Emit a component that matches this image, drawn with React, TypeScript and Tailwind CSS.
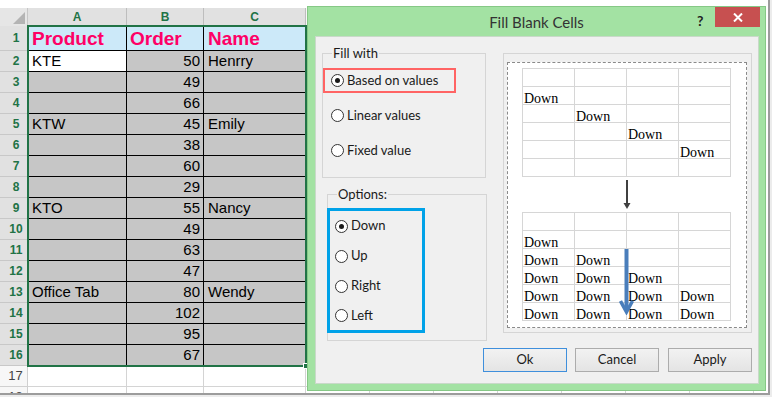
import React from "react";

type Row = { a?: string; b: string; c?: string };

const DATA: Row[] = [
  { a: "KTE", b: "50", c: "Henrry" },
  { b: "49" },
  { b: "66" },
  { a: "KTW", b: "45", c: "Emily" },
  { b: "38" },
  { b: "60" },
  { b: "29" },
  { a: "KTO", b: "55", c: "Nancy" },
  { b: "49" },
  { b: "63" },
  { b: "47" },
  { a: "Office Tab", b: "80", c: "Wendy" },
  { b: "102" },
  { b: "95" },
  { b: "67" },
];

const EXTRA = ["D", "E", "F", "G", "H", "I", "J"];

function RowHead({ n, sel }: { n: number; sel?: boolean }) {
  return (
    <div
      className={
        sel
          ? "w-[28px] shrink-0 flex items-center justify-center pl-[4px] bg-[#e1e1e1] border-b border-[#c8c8c8] text-[12px] font-bold text-[#217346]"
          : "w-[28px] shrink-0 flex items-center justify-center pl-[4px] bg-[#f7f7f7] border-b border-r border-[#d0d0d0] text-[13px] text-[#444]"
      }
    >
      {n}
    </div>
  );
}

function Blank() {
  return (
    <>
      {EXTRA.map((k) => (
        <div key={k} className="w-[64px] shrink-0 bg-white border-r border-b border-[#d4d4d4]" />
      ))}
    </>
  );
}

function Sheet() {
  return (
    <div className="relative flex flex-col w-[768px] h-[393px] overflow-hidden bg-white border-r-2 border-b-2 border-[#9c9c9c] box-content">
      <div className="h-[8px] shrink-0 bg-white" />
      {/* column headers */}
      <div className="flex h-[18px] shrink-0">
        <div className="relative w-[28px] shrink-0 bg-[#e6e6e6] border-r border-[#c6c6c6]">
          <svg className="absolute left-[13px] top-[4px]" width="12" height="12" viewBox="0 0 12 12">
            <path d="M12 0 L12 12 L0 12 Z" fill="#b4b4b4" />
          </svg>
        </div>
        <div className="w-[99px] shrink-0 flex items-center justify-center bg-[#e1e1e1] border-r border-[#bdbdbd] text-[12px] font-bold text-[#217346]">
          A
        </div>
        <div className="w-[77px] shrink-0 flex items-center justify-center bg-[#e1e1e1] border-r border-[#bdbdbd] text-[12px] font-bold text-[#217346]">
          B
        </div>
        <div className="w-[102px] shrink-0 flex items-center justify-center bg-[#e1e1e1] border-r border-[#bdbdbd] text-[12px] font-bold text-[#217346]">
          C
        </div>
        {EXTRA.map((k) => (
          <div
            key={k}
            className="w-[64px] shrink-0 flex items-center justify-center bg-[#f7f7f7] border-r border-[#d4d4d4] text-[12px] text-[#444]"
          >
            {k}
          </div>
        ))}
      </div>

      {/* row 1 */}
      <div className="flex h-[25px] shrink-0">
        <RowHead n={1} sel />
        <div className="w-[99px] shrink-0 bg-[#cce9f9] border-r border-b border-black pl-[4px] pt-[1px] text-[19px] leading-[24px] font-bold text-[#ff0066]">
          Product
        </div>
        <div className="w-[77px] shrink-0 bg-[#cce9f9] border-r border-b border-black pl-[3px] pt-[1px] text-[19px] leading-[24px] font-bold text-[#ff0066]">
          Order
        </div>
        <div className="w-[102px] shrink-0 bg-[#cce9f9] border-r border-b border-black pl-[4px] pt-[1px] text-[19px] leading-[24px] font-bold text-[#ff0066]">
          Name
        </div>
        <Blank />
      </div>

      {DATA.map((r, i) => (
        <div key={i} className="flex h-[21px] shrink-0">
          <RowHead n={i + 2} sel />
          <div
            className={
              i === 0
                ? "w-[99px] shrink-0 bg-white border-r border-b border-black pl-[4px] text-[15px] leading-[20px] text-black"
                : "w-[99px] shrink-0 bg-[#c6c6c6] border-r border-b border-black pl-[4px] text-[15px] leading-[20px] text-black"
            }
          >
            {r.a}
          </div>
          <div className="w-[77px] shrink-0 bg-[#c6c6c6] border-r border-b border-black pr-[3px] text-right text-[15px] leading-[20px] text-black">
            {r.b}
          </div>
          <div className="w-[102px] shrink-0 bg-[#c6c6c6] border-r border-b border-black pl-[4px] text-[15px] leading-[20px] text-black">
            {r.c}
          </div>
          <Blank />
        </div>
      ))}

      {[17, 18].map((n) => (
        <div key={n} className="flex h-[21px] shrink-0">
          <RowHead n={n} />
          <div className="w-[99px] shrink-0 border-r border-b border-[#d4d4d4]" />
          <div className="w-[77px] shrink-0 border-r border-b border-[#d4d4d4]" />
          <div className="w-[102px] shrink-0 border-r border-b border-[#d4d4d4]" />
          <Blank />
        </div>
      ))}

      {/* selection outline A1:C16 */}
      <div className="absolute left-[27px] top-[25px] w-[280px] h-[342px] border-2 border-[#217346] pointer-events-none" />
      <div className="absolute left-[303px] top-[363px] w-[6px] h-[6px] bg-[#217346] border border-white" />
    </div>
  );
}

function Radio({ checked }: { checked?: boolean }) {
  return (
    <span className="w-[13px] h-[13px] shrink-0 rounded-full border border-[#333] bg-white flex items-center justify-center">
      {checked && <span className="w-[5px] h-[5px] rounded-full bg-[#1a1a1a]" />}
    </span>
  );
}

function Opt({ label, checked, h }: { label: string; checked?: boolean; h: string }) {
  return (
    <div className={`flex items-center gap-[3px] ${h}`}>
      <Radio checked={checked} />
      <span>{label}</span>
    </div>
  );
}

function MiniGrid({ filled }: { filled: (r: number, c: number) => boolean }) {
  return (
    <div className="grid grid-cols-[repeat(4,52px)] border-t border-l border-[#d6d6d6] w-max">
      {Array.from({ length: 24 }).map((_, k) => {
        const r = Math.floor(k / 4);
        const c = k % 4;
        return (
          <div
            key={k}
            className="h-[18px] border-r border-b border-[#d6d6d6] pl-[1px] pt-[5px] text-[14px] leading-[14px] text-black font-['Liberation_Serif',serif]"
          >
            {filled(r, c) ? "Down" : ""}
          </div>
        );
      })}
    </div>
  );
}

function Button({ label, primary }: { label: string; primary?: boolean }) {
  return (
    <div
      className={
        primary
          ? "h-[24px] w-[84px] flex items-center justify-center border border-[#3f8fdc] bg-gradient-to-b from-[#f2f2f2] to-[#e4e4e4]"
          : "h-[24px] w-[84px] flex items-center justify-center border border-[#acacac] bg-gradient-to-b from-[#f2f2f2] to-[#e4e4e4]"
      }
    >
      {label}
    </div>
  );
}

function Dialog() {
  return (
    <div className="absolute left-[307px] top-[6px] w-[459px] h-[385px] flex flex-col bg-[#a3e2a3] border border-[#86c886] font-['Lato',sans-serif] text-[13px] text-[#1a1a1a]">
      <div className="relative h-[29px] shrink-0 flex items-center justify-center">
        <span className="text-[15px] text-[#333] pt-[1px]">Fill Blank Cells</span>
        <span className="absolute left-[389px] top-[3px] text-[14px] font-bold text-[#222]">?</span>
        <div className="absolute left-[407px] top-0 w-[45px] h-[20px] bg-[#c75050] flex items-center justify-center">
          <svg width="10" height="9" viewBox="0 0 10 9">
            <path d="M1 0.5 L9 8.5 M9 0.5 L1 8.5" stroke="white" strokeWidth="2" />
          </svg>
        </div>
      </div>

      <div className="flex-1 ml-[7px] mr-[6px] mb-[6px] flex flex-col bg-[#f0f0f0] border border-[#c9d9c9] pt-[16px] px-[6px]">
        <div className="flex gap-[16px] h-[288px]">
          {/* left column */}
          <div className="w-[165px] flex flex-col">
            <div className="relative w-[164px] h-[125px] border border-[#d5d5d5]">
              <span className="absolute left-[9px] top-[-9px] px-[1px] bg-[#f0f0f0] leading-[16px]">Fill with</span>
              <div className="flex flex-col gap-[10px] mt-[14px]">
                <div className="w-[133px] h-[25px] border-2 border-[#ff6464] pl-[6px] flex items-center">
                  <Opt label="Based on values" checked h="h-[21px]" />
                </div>
                <div className="pl-[8px]">
                  <Opt label="Linear values" h="h-[25px]" />
                </div>
                <div className="pl-[8px]">
                  <Opt label="Fixed value" h="h-[25px]" />
                </div>
              </div>
            </div>

            <div className="relative ml-[5px] mt-[16px] w-[160px] h-[147px] border border-[#d5d5d5]">
              <span className="absolute left-[9px] top-[-9px] px-[1px] bg-[#f0f0f0] leading-[16px]">Options:</span>
              <div className="ml-[-1px] mt-[13px] w-[98px] border-[3px] border-[#00a2e8] pl-[5px] flex flex-col">
                <Opt label="Down" checked h="h-[30px]" />
                <Opt label="Up" h="h-[30px]" />
                <Opt label="Right" h="h-[30px]" />
                <Opt label="Left" h="h-[29px]" />
              </div>
            </div>
          </div>

          {/* preview */}
          <div className="w-[249px] h-[280px] border border-[#d5d5d5] pl-[3px] pt-[8px]">
            <div className="relative w-[240px] h-[266px] bg-white border border-dashed border-[#8a8a8a] pl-[14px] pt-[5px] flex flex-col">
              <MiniGrid filled={(r, c) => r - 1 === c} />
              <div className="h-[35px] w-[209px] flex justify-center pt-[3px]">
                <svg width="8" height="30" viewBox="0 0 8 30">
                  <path d="M4 0 L4 24" stroke="#404040" strokeWidth="2" />
                  <path d="M0.5 23 L7.5 23 L4 29 Z" fill="#404040" />
                </svg>
              </div>
              <MiniGrid filled={(r, c) => r >= 1 && c < r} />
              <svg className="absolute left-[111px] top-[186px]" width="16" height="66" viewBox="0 0 16 66">
                <path d="M7.5 0 L7.5 60" stroke="#4a7ebb" strokeWidth="4" />
                <path d="M1.5 52 L7.5 63 L13.5 52" stroke="#4a7ebb" strokeWidth="3.5" fill="none" strokeLinejoin="miter" />
              </svg>
            </div>
          </div>
        </div>

        <div className="flex justify-end mt-[7px]">
          <Button label="Ok" primary />
          <div className="w-[8px]" />
          <Button label="Cancel" />
          <div className="w-[9px]" />
          <Button label="Apply" />
        </div>
      </div>
    </div>
  );
}

export default function App() {
  return (
    <div className="relative w-[772px] h-[397px] overflow-hidden bg-[#ececec] font-['Liberation_Sans',Arial,sans-serif]">
      <Sheet />
      <Dialog />
    </div>
  );
}
